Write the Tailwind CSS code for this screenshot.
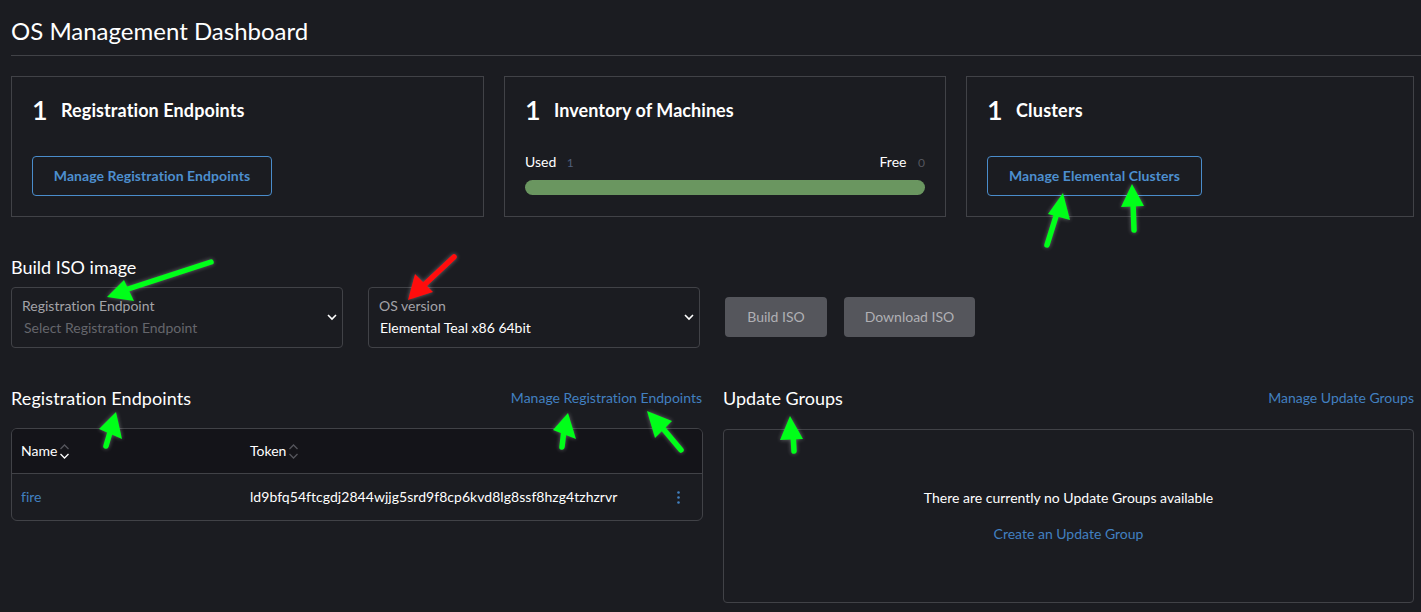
<!DOCTYPE html>
<html lang="en">
<head>
  <meta charset="UTF-8">
  <title>OS Management Dashboard</title>
  <script src="https://cdn.jsdelivr.net/npm/@tailwindcss/browser@4"></script>
</head>
<body class="bg-[#1b1c21] text-white font-['Lato',sans-serif] [font-variant-ligatures:none] overflow-hidden">
<div class="relative w-[1421px] h-[612px] overflow-hidden">
  <main class="pl-[11px] pr-[7px] pt-[14px]">
    <!-- Header -->
    <h1 class="h-[42px] border-b border-[#414247] text-2xl leading-[33px] mr-[-7px]">OS Management Dashboard</h1>

    <!-- Cards -->
    <div class="grid grid-cols-[473px_442px_448px] gap-x-5 mt-5">
      <div class="h-[141px] border border-[#414247] pt-[19px] pl-5">
        <div class="flex items-center h-7 leading-7">
          <span class="w-[29px] text-[27px] font-semibold">1</span>
          <span class="text-lg font-bold tracking-[0.1px]">Registration Endpoints</span>
        </div>
        <button class="mt-8 h-10 w-[240px] border border-[#4a8ccb] rounded text-sm font-bold tracking-[0.07px] text-[#4d8fcf]">Manage Registration Endpoints</button>
      </div>
      <div class="h-[141px] border border-[#414247] pt-[19px] px-5">
        <div class="flex items-center h-7 leading-7">
          <span class="w-[29px] text-[27px] font-semibold">1</span>
          <span class="text-lg font-bold tracking-[0.05px]">Inventory of Machines</span>
        </div>
        <div class="flex justify-between mt-7 h-5 text-sm leading-5">
          <span>Used <span class="ml-[7px] text-xs text-[#4f5f7c]">1</span></span>
          <span>Free <span class="ml-2 text-xs text-[#54555d]">0</span></span>
        </div>
        <div class="mt-2 h-[15px] rounded-full bg-[#6a9660]"></div>
      </div>
      <div class="h-[141px] border border-[#414247] pt-[19px] pl-5">
        <div class="flex items-center h-7 leading-7">
          <span class="w-[29px] text-[27px] font-semibold">1</span>
          <span class="text-lg font-bold tracking-[0.2px]">Clusters</span>
        </div>
        <button class="mt-8 h-10 w-[215px] border border-[#4a8ccb] rounded text-sm font-bold tracking-[0.07px] text-[#4d8fcf]">Manage Elemental Clusters</button>
      </div>
    </div>

    <!-- Build ISO -->
    <h2 class="mt-[38px] text-lg leading-6">Build ISO image</h2>
    <div class="flex items-start mt-2">
      <div class="relative w-[332px] h-[61px] border border-[#414247] rounded pl-[10px] pt-2">
        <div class="text-sm leading-5 text-[#a3a3a8]">Registration Endpoint</div>
        <div class="text-sm leading-5 mt-0.5 pl-0.5 text-[#65666c]">Select Registration Endpoint</div>
        <svg class="absolute right-[5px] top-[26px] w-[10px] h-[7px]" viewBox="0 0 10 7" fill="none" stroke="#fff" stroke-width="1.6"><path d="M1 1l4 4 4-4"/></svg>
      </div>
      <div class="relative w-[332px] h-[61px] ml-[25px] border border-[#414247] rounded pl-[10px] pt-2">
        <div class="text-sm leading-5 text-[#a3a3a8]">OS version</div>
        <div class="text-sm leading-5 mt-0.5 pl-px text-white">Elemental Teal x86 64bit</div>
        <svg class="absolute right-[5px] top-[26px] w-[10px] h-[7px]" viewBox="0 0 10 7" fill="none" stroke="#fff" stroke-width="1.6"><path d="M1 1l4 4 4-4"/></svg>
      </div>
      <button class="mt-[10px] ml-[25px] w-[102px] h-10 rounded bg-[#55565c] text-sm text-[#b0b0b4]">Build ISO</button>
      <button class="mt-[10px] ml-[17px] w-[131px] h-10 rounded bg-[#55565c] text-sm text-[#b0b0b4]">Download ISO</button>
    </div>

    <!-- Lists -->
    <div class="grid grid-cols-[692px_691px] gap-x-5 mt-[38px]">
      <section>
        <div class="flex justify-between items-center h-6 pr-px">
          <h2 class="text-lg leading-6 tracking-[0.1px]">Registration Endpoints</h2>
          <a class="text-sm text-[#4280c0]">Manage Registration Endpoints</a>
        </div>
        <div class="mt-[18px] border border-[#414247] rounded-md overflow-hidden">
          <div class="flex items-center h-[45px] bg-[#141419] border-b border-[#414247] text-sm">
            <div class="flex items-center w-[238px] pl-[9px]">Name
              <svg class="ml-0.5 w-[11px] h-[15px]" viewBox="0 0 11 15" fill="none" stroke-width="1.3"><path d="M1.5 5l4-4 4 4" stroke="#55565c"/><path d="M1.5 10l4 4 4-4" stroke="#fff"/></svg>
            </div>
            <div class="flex items-center">Token
              <svg class="ml-0.5 w-[11px] h-[15px]" viewBox="0 0 11 15" fill="none" stroke-width="1.3" stroke="#55565c"><path d="M1.5 5l4-4 4 4"/><path d="M1.5 10l4 4 4-4"/></svg>
            </div>
          </div>
          <div class="flex items-center h-[46px] text-sm">
            <a class="w-[238px] pl-[9px] text-[#4280c0]">fire</a>
            <span class="flex-1 tracking-[0.04px]">ld9bfq54ftcgdj2844wjjg5srd9f8cp6kvd8lg8ssf8hzg4tzhzrvr</span>
            <svg class="mr-[22px] w-[3px] h-[13px]" viewBox="0 0 3 13" fill="#4280c0"><circle cx="1.5" cy="1.5" r="1.3"/><circle cx="1.5" cy="6.5" r="1.3"/><circle cx="1.5" cy="11.5" r="1.3"/></svg>
          </div>
        </div>
      </section>
      <section>
        <div class="flex justify-between items-center h-6">
          <h2 class="text-lg leading-6">Update Groups</h2>
          <a class="text-sm text-[#4280c0]">Manage Update Groups</a>
        </div>
        <div class="mt-[19px] h-[174px] border border-[#414247] rounded flex flex-col items-center pt-[58px] text-sm leading-5">
          <p>There are currently no Update Groups available</p>
          <a class="mt-4 text-[#4280c0]">Create an Update Group</a>
        </div>
      </section>
    </div>
  </main>

  <!-- Annotation arrows drawn over the screenshot -->
  <svg class="absolute inset-0 pointer-events-none drop-shadow-[0_0_2px_rgba(255,255,255,0.35)]" width="1421" height="612" viewBox="0 0 1421 612" fill="none" stroke-width="5.5" stroke-linecap="round">
    <g stroke="#00ff19" fill="#00ff19">
      <path d="M211 262L125 290"/><path stroke="none" d="M107 297l17-17 10 21z"/>
      <path d="M1047 245l10-32"/><path stroke="none" d="M1063 193l7 27-22-6z"/>
      <path d="M1134 230l-1-28"/><path stroke="none" d="M1132 184l12 22-23 1z"/>
      <path d="M106 446l5-17"/><path stroke="none" d="M116 412l6 27-23-10z"/>
      <path d="M562 447l2-17"/><path stroke="none" d="M568 413l8 26-23-9z"/>
      <path d="M681 450l-21-25"/><path stroke="none" d="M647 411l25 10-17 17z"/>
      <path d="M794 451l-1-18"/><path stroke="none" d="M790 416l13 23-23 1z"/>
    </g>
    <g stroke="#ff0d0d" fill="#ff0d0d">
      <path d="M454 257l-31 29"/><path stroke="none" d="M408 300l7-26 18 18z"/>
    </g>
  </svg>
</div>
</body>
</html>
